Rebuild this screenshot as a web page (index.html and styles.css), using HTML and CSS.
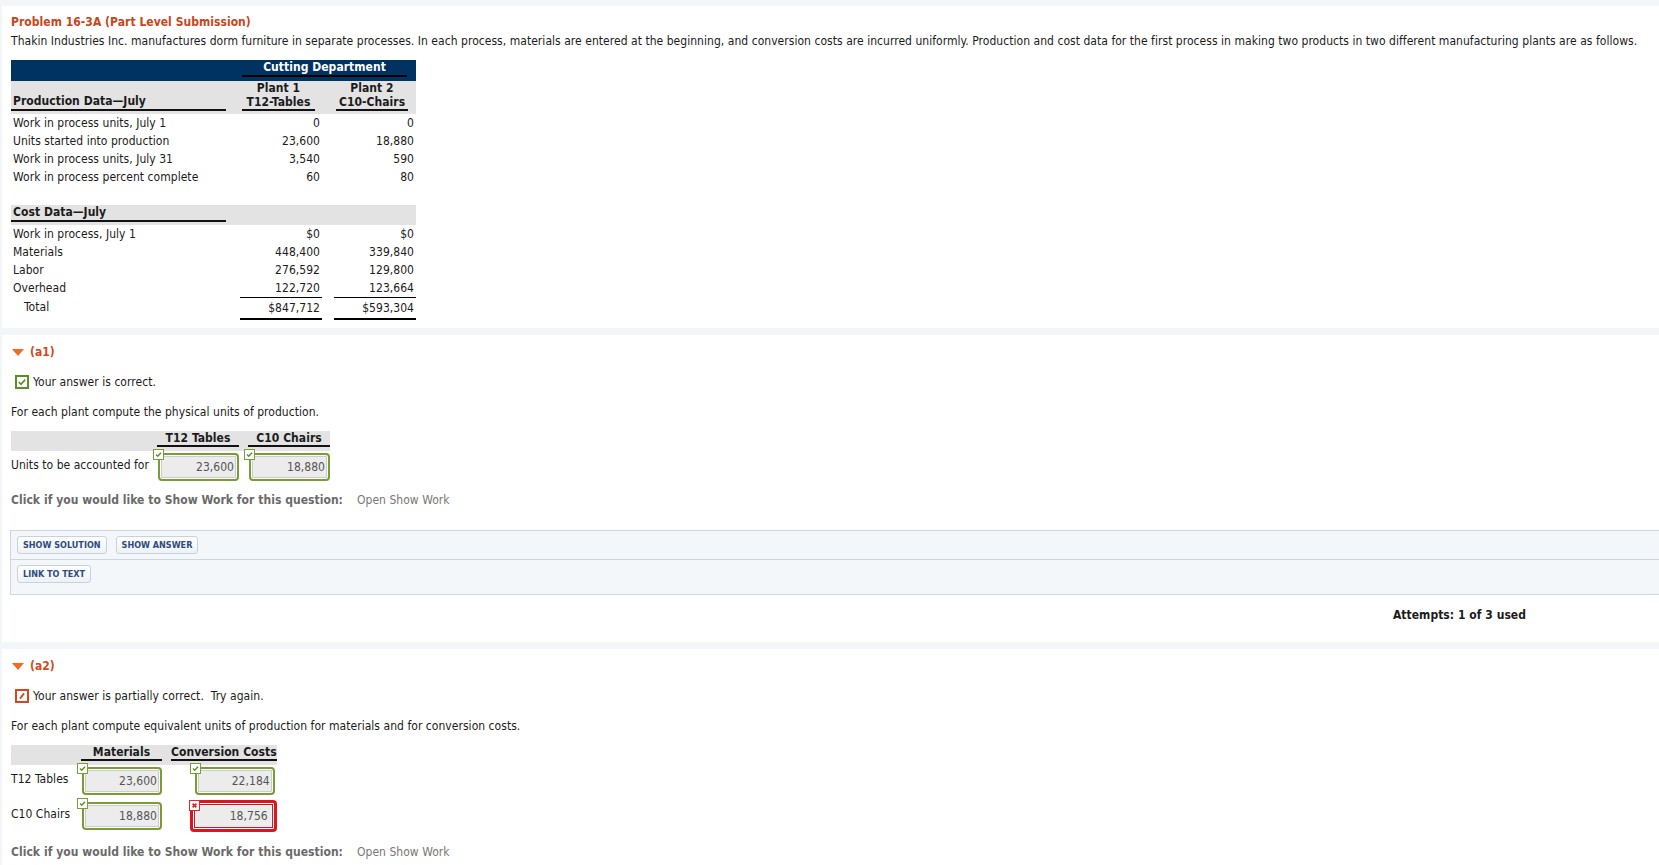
FILE: index.html
```html
<!DOCTYPE html>
<html lang="en">
  <head>
    <meta charset="UTF-8" />
    <meta name="viewport" content="width=device-width, initial-scale=1.0" />
    <title>Problem 16-3A</title>
    <link rel="stylesheet" href="styles.css">
  </head>
  <body>
    <div class="panel intro">
      <h1 class="problem-title">Problem 16-3A (Part Level Submission)</h1>
      <p class="problem-text">Thakin Industries Inc. manufactures dorm furniture in separate processes. In each process, materials are entered at the beginning, and conversion costs are incurred uniformly. Production and cost data for the first process in making two products in two different manufacturing plants are as follows.</p>

      <table class="data-table">
        <colgroup>
          <col class="c-label" />
          <col class="c-num" />
          <col class="c-gap" />
          <col class="c-num" />
        </colgroup>
        <tr class="dept-row">
          <td></td>
          <td colspan="3"><div class="dept-name">Cutting Department</div></td>
        </tr>
        <tr class="head-row">
          <td><div class="head-label tall">Production Data—July</div></td>
          <td><div class="head-col first">Plant 1<br />T12-Tables</div></td>
          <td></td>
          <td><div class="head-col second">Plant 2<br />C10-Chairs</div></td>
        </tr>
        <tr class="line"><td>Work in process units, July 1</td><td class="num">0</td><td></td><td class="num">0</td></tr>
        <tr class="line"><td>Units started into production</td><td class="num">23,600</td><td></td><td class="num">18,880</td></tr>
        <tr class="line"><td>Work in process units, July 31</td><td class="num">3,540</td><td></td><td class="num">590</td></tr>
        <tr class="line"><td>Work in process percent complete</td><td class="num">60</td><td></td><td class="num">80</td></tr>
        <tr class="spacer"><td colspan="4"></td></tr>
        <tr class="cost-head">
          <td><div class="head-label">Cost Data—July</div></td>
          <td></td><td></td><td></td>
        </tr>
        <tr class="line"><td>Work in process, July 1</td><td class="num">$0</td><td></td><td class="num">$0</td></tr>
        <tr class="line"><td>Materials</td><td class="num">448,400</td><td></td><td class="num">339,840</td></tr>
        <tr class="line"><td>Labor</td><td class="num">276,592</td><td></td><td class="num">129,800</td></tr>
        <tr class="line"><td>Overhead</td><td class="num">122,720</td><td></td><td class="num">123,664</td></tr>
        <tr class="total"><td class="indent">Total</td><td class="num">$847,712</td><td></td><td class="num">$593,304</td></tr>
      </table>
    </div>

    <div class="panel part">
      <div class="part-head"><span class="caret"></span>(a1)</div>
      <div class="status">
        <svg class="status-icon" width="14" height="14" viewBox="0 0 14 14">
          <rect x="1" y="1" width="12" height="12" fill="#fff" stroke="#5e8f26" stroke-width="2" />
          <path d="M3.8 7.2 L6 9.3 L10.2 4.6" fill="none" stroke="#5e8f26" stroke-width="1.6" />
        </svg>
        <span>Your answer is correct.</span>
      </div>
      <p class="prompt">For each plant compute the physical units of production.</p>

      <table class="answer-table units">
        <tr class="answer-head">
          <td class="a-label"></td>
          <td class="a-col one"><div class="col-head">T12 Tables</div></td>
          <td class="a-col two"><div class="col-head">C10 Chairs</div></td>
        </tr>
        <tr class="answer-row">
          <td class="a-label"><span class="row-label">Units to be accounted for</span></td>
          <td class="a-col one">
            <div class="answer ok">23,600
              <svg class="badge" width="11" height="11" viewBox="0 0 11 11"><rect x="0.5" y="0.5" width="10" height="10" fill="#fff" stroke="#77a03a" /><path d="M3 5.6 L4.7 7.2 L8 3.7" fill="none" stroke="#5e8f26" stroke-width="1.4" /></svg>
            </div>
          </td>
          <td class="a-col two">
            <div class="answer ok">18,880
              <svg class="badge" width="11" height="11" viewBox="0 0 11 11"><rect x="0.5" y="0.5" width="10" height="10" fill="#fff" stroke="#77a03a" /><path d="M3 5.6 L4.7 7.2 L8 3.7" fill="none" stroke="#5e8f26" stroke-width="1.4" /></svg>
            </div>
          </td>
        </tr>
      </table>

      <p class="work"><b>Click if you would like to Show Work for this question:</b><span class="work-link">Open Show Work</span></p>

      <div class="tools">
        <div class="tools-row">
          <button class="tool-btn">Show Solution</button>
          <button class="tool-btn">Show Answer</button>
        </div>
        <div class="tools-row last">
          <button class="tool-btn">Link to Text</button>
        </div>
      </div>

      <p class="attempts">Attempts: 1 of 3 used</p>
    </div>

    <div class="panel part">
      <div class="part-head"><span class="caret"></span>(a2)</div>
      <div class="status">
        <svg class="status-icon" width="14" height="14" viewBox="0 0 14 14">
          <rect x="1" y="1" width="12" height="12" fill="#fff" stroke="#d8461c" stroke-width="2" />
          <path d="M5 9.6 L9 4.4" fill="none" stroke="#d8461c" stroke-width="1.8" />
        </svg>
        <span>Your answer is partially correct.&nbsp; Try again.</span>
      </div>
      <p class="prompt">For each plant compute equivalent units of production for materials and for conversion costs.</p>

      <table class="answer-table equiv">
        <tr class="answer-head">
          <td class="a-label"></td>
          <td class="a-col one"><div class="col-head">Materials</div></td>
          <td class="a-col two"><div class="col-head">Conversion Costs</div></td>
        </tr>
        <tr class="answer-row">
          <td class="a-label"><span class="row-label">T12 Tables</span></td>
          <td class="a-col one">
            <div class="answer ok">23,600
              <svg class="badge" width="11" height="11" viewBox="0 0 11 11"><rect x="0.5" y="0.5" width="10" height="10" fill="#fff" stroke="#77a03a" /><path d="M3 5.6 L4.7 7.2 L8 3.7" fill="none" stroke="#5e8f26" stroke-width="1.4" /></svg>
            </div>
          </td>
          <td class="a-col two">
            <div class="answer ok">22,184
              <svg class="badge" width="11" height="11" viewBox="0 0 11 11"><rect x="0.5" y="0.5" width="10" height="10" fill="#fff" stroke="#77a03a" /><path d="M3 5.6 L4.7 7.2 L8 3.7" fill="none" stroke="#5e8f26" stroke-width="1.4" /></svg>
            </div>
          </td>
        </tr>
        <tr class="answer-row">
          <td class="a-label"><span class="row-label">C10 Chairs</span></td>
          <td class="a-col one">
            <div class="answer ok">18,880
              <svg class="badge" width="11" height="11" viewBox="0 0 11 11"><rect x="0.5" y="0.5" width="10" height="10" fill="#fff" stroke="#77a03a" /><path d="M3 5.6 L4.7 7.2 L8 3.7" fill="none" stroke="#5e8f26" stroke-width="1.4" /></svg>
            </div>
          </td>
          <td class="a-col two">
            <div class="answer wrong">18,756
              <svg class="badge" width="11" height="11" viewBox="0 0 11 11"><rect x="0.5" y="0.5" width="10" height="10" fill="#fff" stroke="#e0252b" /><path d="M3.6 3.6 L7.4 7.4 M7.4 3.6 L3.6 7.4" fill="none" stroke="#e0252b" stroke-width="1.7" /></svg>
            </div>
          </td>
        </tr>
      </table>

      <p class="work"><b>Click if you would like to Show Work for this question:</b><span class="work-link">Open Show Work</span></p>
    </div>
  </body>
</html>
```

FILE: styles.css
```css
* {
  margin: 0;
  padding: 0;
  box-sizing: border-box;
}

body {
  background: #f3f6f9;
  padding-top: 6px;
  font-family: "DejaVu Sans", Verdana, sans-serif;
  font-stretch: condensed;
  font-size: 12px;
  letter-spacing: 0.04px;
  color: #1b1b1b;
}

.panel {
  background: #fff;
  margin-left: 2px;
  margin-bottom: 7px;
  padding: 8px 0 8px 9px;
}

.problem-title {
  font-size: 12px;
  line-height: 16px;
  color: #c8461a;
}

.problem-text {
  margin-top: 3px;
  line-height: 16px;
}

/* data table */
.data-table {
  margin-top: 11px;
  border-collapse: separate;
  border-spacing: 0;
  table-layout: fixed;
  width: 405px;
}

.c-label { width: 229px; }
.c-num { width: 82px; }
.c-gap { width: 12px; }

.data-table td {
  padding: 0;
  vertical-align: top;
  white-space: nowrap;
}

.dept-row td {
  background: #003361;
  height: 21px;
}

.dept-name {
  margin: 0 9px 0 2px;
  line-height: 15px;
  border-bottom: 2px solid #000;
  text-align: center;
  color: #fff;
  font-weight: bold;
}

.head-row td,
.cost-head td {
  background: #e3e3e3;
}

.head-row td {
  height: 33px;
}

.cost-head td {
  height: 20px;
}

.head-label {
  margin-right: 14px;
  padding-left: 2px;
  line-height: 15px;
  border-bottom: 2px solid #111;
  font-weight: bold;
}

.head-label.tall {
  padding-top: 13px;
}

.head-col {
  line-height: 14px;
  border-bottom: 2px solid #111;
  text-align: center;
  font-weight: bold;
}

.head-col.first { margin: 0 7px 0 2px; }
.head-col.second { margin: 0 8px 0 2px; }

.line td {
  line-height: 18px;
  padding-left: 2px;
}

.data-table td.num {
  text-align: right;
  padding: 0 2px 0 0;
}

.spacer td {
  height: 19px;
}

.total td {
  line-height: 20px;
  padding-left: 2px;
}

.total td.num {
  border-top: 1px solid #000;
  border-bottom: 2px solid #000;
}

.total td.indent {
  padding-left: 13px;
}

/* parts */
.part {
  padding: 9px 0 19px 9px;
}

.part-head {
  display: flex;
  align-items: center;
  line-height: 16px;
  font-size: 12px;
  font-weight: bold;
  color: #cf4b1c;
}

.caret {
  width: 0;
  height: 0;
  margin: 1px 6px 0 1px;
  border-style: solid;
  border-width: 7px 6px 0 6px;
  border-color: #f06a22 transparent transparent transparent;
}

.status {
  display: flex;
  align-items: center;
  gap: 4px;
  margin-top: 14px;
  line-height: 16px;
}

.status-icon {
  margin-left: 4px;
  display: block;
}

.prompt {
  margin-top: 14px;
  line-height: 16px;
}

/* answer tables */
.answer-table {
  margin-top: 11px;
  border-collapse: separate;
  border-spacing: 0;
  table-layout: fixed;
}

.answer-table td {
  padding: 0;
  white-space: nowrap;
}

.units .a-label { width: 141px; }
.units .a-col.one { width: 87px; padding-left: 5px; }
.units .a-col.two { width: 91px; padding-left: 9px; }

.equiv .a-label { width: 65px; }
.equiv .a-col.one { width: 86px; padding-left: 5px; }
.equiv .a-col.two { width: 114px; padding-left: 9px; }

.answer-head td {
  background: #e3e3e3;
  height: 20px;
  vertical-align: top;
}

.col-head {
  line-height: 14px;
  border-bottom: 2px solid #111;
  text-align: center;
  font-size: 12px;
  font-weight: bold;
}

.answer-row td {
  padding: 2px 0 4px 0;
  vertical-align: middle;
}

.equiv .answer-row td {
  padding-bottom: 5px;
}

.answer-row td.a-label,
.equiv .answer-row td.a-label {
  padding-bottom: 9px;
}

.row-label {
  line-height: 16px;
}

.answer {
  position: relative;
  width: 81px;
  height: 28px;
  margin-left: 1px;
  padding-right: 3px;
  border: 2px solid #7a9c34;
  border-radius: 4px;
  background: #ececec;
  box-shadow: inset 0 0 0 1px #fff, inset 0 0 0 2px #cdcdcd;
  text-align: right;
  line-height: 24px;
  font-size: 12px;
  color: #555;
}

.equiv .answer {
  width: 80px;
}

.equiv .a-col.two .answer {
  margin-left: auto;
  margin-right: 2px;
}

.answer.wrong {
  width: 87px;
  height: 32px;
  margin: -2px 0 -2px auto;
  padding-right: 6px;
  border: 3px solid #e0141e;
  box-shadow: inset 0 0 0 1px #fff, inset 0 0 0 2px #e0141e, inset 0 0 0 3px #f3f3f3;
  line-height: 26px;
}

.equiv .a-col.two .answer.wrong {
  margin-right: 0;
}

.badge {
  position: absolute;
  left: -7px;
  top: -6px;
  display: block;
}

.answer.wrong .badge {
  left: -4px;
  top: -3px;
}

.work {
  margin-top: 7px;
  line-height: 16px;
  color: #6a6a6a;
}

.equiv + .work {
  margin-top: 9px;
}

.work-link {
  margin-left: 14px;
  color: #777;
}

/* tools panel */
.tools {
  margin: 22px 0 0 -1px;
  border: 1px solid #cdd5e0;
  border-right: none;
  background: #f4f7fa;
}

.tools-row {
  display: flex;
  gap: 9px;
  padding: 5px 6px;
}

.tools-row + .tools-row {
  border-top: 1px solid #cdd5e0;
  padding-bottom: 11px;
}

.tool-btn {
  height: 18px;
  padding: 0 5px;
  border: 1px solid #c9d1de;
  border-radius: 3px;
  background: linear-gradient(#ffffff, #eef1f5);
  font-family: "DejaVu Sans", Verdana, sans-serif;
  font-stretch: condensed;
  font-size: 9px;
  font-weight: bold;
  text-transform: uppercase;
  color: #2c4b7e;
}

.attempts {
  margin-top: 12px;
  padding-right: 133px;
  text-align: right;
  line-height: 16px;
  font-size: 12px;
  font-weight: bold;
}
```
